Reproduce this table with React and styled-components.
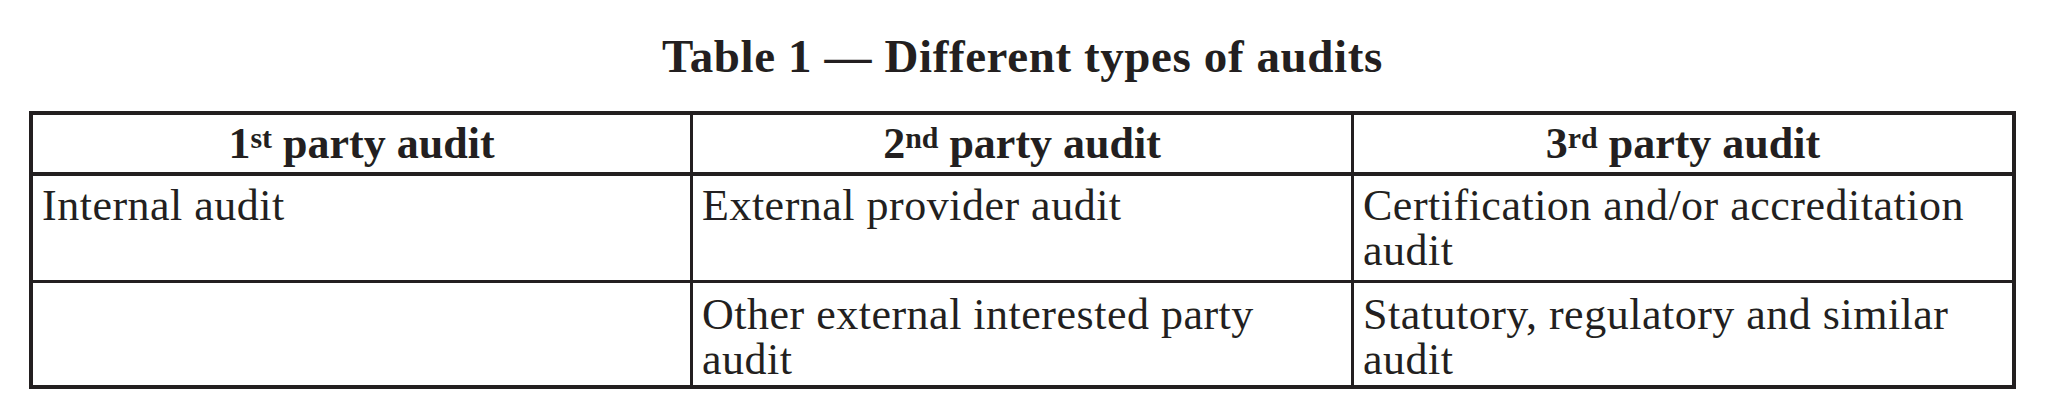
import styled, { createGlobalStyle } from "styled-components";

const ink = "#231f20";

const GlobalStyle = createGlobalStyle`
  html, body {
    margin: 0;
    background: #ffffff;
  }
`;

const Page = styled.main`
  padding: 33px 32px 0 29px;
  font-family: "Liberation Serif", "Times New Roman", serif;
  color: ${ink};
`;

const Title = styled.h1`
  margin: 0 0 32px;
  text-align: center;
  font-size: 47px;
  line-height: 46px;
  font-weight: 700;
  letter-spacing: 0.6px;
`;

const Table = styled.div`
  border: 4px solid ${ink};
`;

const Row = styled.div`
  display: grid;
  grid-template-columns: 657px 1fr 1fr;
  height: ${props => props.$height}px;
  border-top: ${props => props.$rule || 0}px solid ${ink};
  box-sizing: content-box;
`;

const Cell = styled.div`
  & + & {
    border-left: 3px solid ${ink};
  }
`;

const HeadCell = styled(Cell)`
  text-align: center;
  font-size: 44px;
  line-height: ${props => props.$lineHeight}px;
  font-weight: 700;
`;

const BodyCell = styled(Cell)`
  padding: ${props => props.$top}px 10px 0 9px;
  font-size: 44px;
  line-height: 45px;
  letter-spacing: 0.5px;
`;

const Sup = styled.span`
  font-size: 0.68em;
  vertical-align: 10px;
  line-height: 0;
`;

const headers = [
  { num: "1", sup: "st" },
  { num: "2", sup: "nd" },
  { num: "3", sup: "rd" },
];

const rows = [
  { height: 104, rule: 4, top: 7, cells: ["Internal audit", "External provider audit", "Certification and/or accreditation audit"] },
  { height: 102, rule: 3, top: 9, cells: ["", "Other external interested party audit", "Statutory, regulatory and similar audit"] },
];

const App = () => {
  return (
    <>
      <GlobalStyle />
      <Page>
        <Title>Table 1 — Different types of audits</Title>
        <Table>
          <Row $height={57}>
            {headers.map(h => (
              <HeadCell key={h.num} $lineHeight={57}>
                {h.num}
                <Sup>{h.sup}</Sup> party audit
              </HeadCell>
            ))}
          </Row>
          {rows.map((r, i) => (
            <Row key={i} $height={r.height} $rule={r.rule}>
              {r.cells.map((text, j) => (
                <BodyCell key={j} $top={r.top}>
                  {text}
                </BodyCell>
              ))}
            </Row>
          ))}
        </Table>
      </Page>
    </>
  );
};

export default App;
